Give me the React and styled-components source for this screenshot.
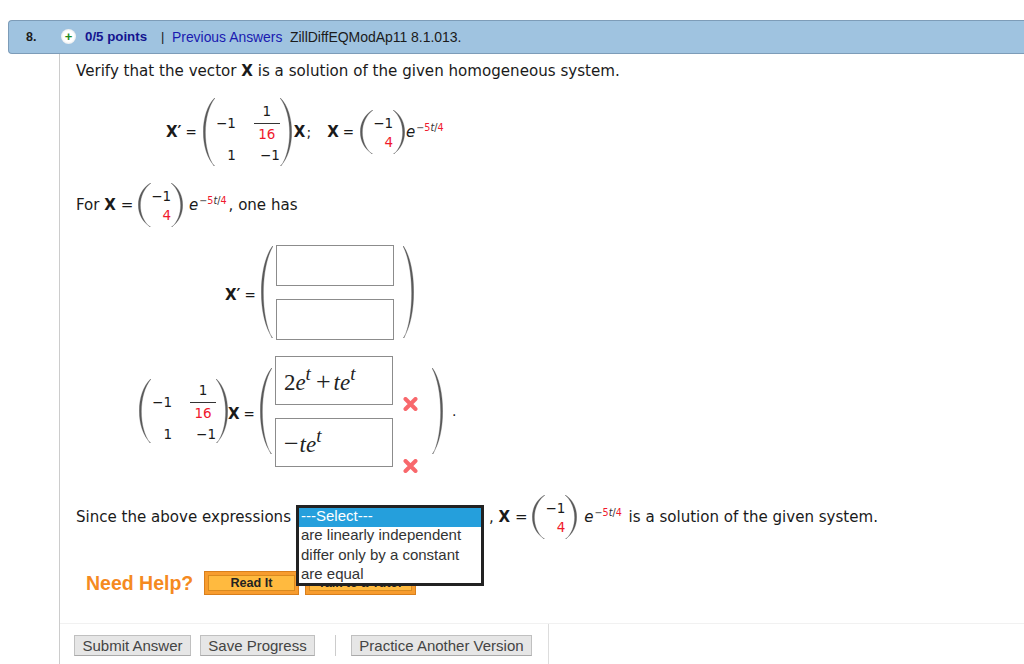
import React from 'react';
import styled, { createGlobalStyle } from 'styled-components';

const Global = createGlobalStyle`
  html, body { margin: 0; padding: 0; background: #fff; }
  body { width: 1024px; height: 664px; overflow: hidden; font-family: "DejaVu Sans", sans-serif; color: #1a1a1a; }
`;
const Page = styled.div`width: 1024px; height: 664px; overflow: hidden; display: flex; flex-direction: column; padding-top: 20px; box-sizing: border-box;`;
const Header = styled.header`
  margin-left: 8px; height: 34px; box-sizing: border-box; background: #9fc3e0; border: 1px solid #7d9cb8; border-right: none; padding-bottom: 1px;
  border-radius: 4px 0 0 4px; display: flex; align-items: center; font-family: "Liberation Sans", sans-serif; font-size: 14px; color: #1b1b1b;
`;
const Num = styled.b`font-size: 12.5px; width: 52px; padding-left: 17px; box-sizing: border-box;`;
const Plus = styled.span`
  width: 15px; height: 15px; border-radius: 50%; background: radial-gradient(#fff 50%, #cfd3d6); display: flex; align-items: center; justify-content: center;
  color: #1c8a1c; font-weight: bold; font-size: 13px; line-height: 15px; margin-right: 9px;
`;
const Points = styled.b`color: #14148f; font-size: 13.3px; width: 76px;`;
const Sep = styled.span`width: 11px; font-size: 13px;`;
const PrevLink = styled.span`color: #1a1ab0; font-size: 13.9px; width: 118px;`;
const Code = styled.span`font-size: 14px; letter-spacing: -0.03px;`;
const Content = styled.main`flex: 1; margin-left: 59px; border-left: 1px solid #ccc; display: flex; flex-direction: column; min-height: 0;`;
const Body = styled.div`padding-left: 16px; flex: 1; min-height: 0; display: flex; flex-direction: column;`;
const Prompt = styled.p`margin: 8px 0 0; font-size: 15.1px; line-height: 18px; height: 18px; white-space: nowrap;`;
const MathRow = styled.div`
  display: flex; align-items: center; white-space: nowrap; font-size: 15.05px; height: ${p => p.$h}px;
  margin-top: ${p => p.$top}px; margin-left: ${p => p.$left || 0}px;
`;
const Eq = styled.span`
  font-size: 13.5px; display: inline-flex; gap: 4px; align-items: center; margin-right: ${p => p.$mr || 0}px; margin-left: ${p => p.$ml || 0}px;
  padding-top: ${p => p.$pt || 0}px;
`;
const BoldX = styled.b`font-size: 15px; margin-left: ${p => p.$ml || 0}px;`;
const Semi = styled.span`font-size: 14px; margin-left: 1px;`;
const ParenSvg = styled.svg`flex: none; display: block; margin: ${p => p.$m || 0};`;
const Cells = styled.div`
  display: grid; grid-template-columns: ${p => p.$cols}; grid-auto-rows: auto; font-size: 13.5px; line-height: 16px; align-items: center; justify-items: end;
  row-gap: ${p => p.$gap || 0}px; padding-top: ${p => p.$pt || 0}px;
`;
const Red = styled.span`color: #f0182c;`;
const Frac = styled.span`display: inline-flex; flex-direction: column; align-items: center; width: 26px; line-height: 15px;`;
const FracTop = styled.span`display: block; width: 100%; text-align: center; border-bottom: 1px solid #333; padding-bottom: 4px; margin-bottom: 3px;`;
const Power = styled.span`display: inline-block; margin-left: ${p => p.$ml || 0}px; margin-right: ${p => p.$mr || 0}px;`;
const E = styled.i`font-size: 15px;`;
const Sup = styled.sup`font-size: 9.6px; line-height: 0; vertical-align: 6px; color: #333; margin-left: 1px;`;
const SupRed = styled.span`color: #f0182c;`;
const Fields = styled.div`display: flex; flex-direction: column; gap: ${p => p.$gap}px; margin: 0 ${p => p.$mr}px 0 1px;`;
const FieldWrap = styled.div`position: relative;`;
const Field = styled.div`
  box-sizing: border-box; width: 118px; height: ${p => p.$h}px; border: 1px solid #8c8c8c; background: #fff; display: flex; align-items: center; padding: 6px 0 0 8px;
  font-family: "Liberation Serif", serif; font-size: 23px; color: #222; white-space: nowrap;
`;
const MathText = styled.span`display: block;`;
const MathI = styled.i`font-family: "Liberation Serif", serif;`;
const MathOp = styled.span`font-size: 26px; line-height: 0; margin: ${p => p.$m};`;
const MathSup = styled.sup`font-size: 19px; line-height: 0; vertical-align: 10px; font-style: italic;`;
const Mark = styled.svg`position: absolute; left: 128px; bottom: -6px; width: 15px; height: 14px;`;
const Dot = styled.span`margin-left: 9px; font-size: 14px;`;
const Placeholder = styled.span`display: inline-block; position: relative; width: 188px; height: 20px; margin: 0 5px 0 5px; flex: none;`;
const Dropdown = styled.ul`
  position: absolute; z-index: 3; left: 0; top: -2px; width: 188px; height: 81px; box-sizing: border-box; margin: 0; padding: 0; list-style: none; background: #fff; border: 3px solid #222;
  font-family: "Liberation Sans", sans-serif; font-size: 15px; color: #333; line-height: 16.5px;
`;
const Option = styled.li`padding-left: 2px; height: 19.3px; ${p => p.$active && 'background:#259fdc;color:#fff;'}`;
const HelpRow = styled.div`display: flex; align-items: center; height: 24px; margin: 31px 0 0 10px;`;
const HelpLabel = styled.b`font-family: "Liberation Sans", sans-serif; font-size: 19.5px; color: #f58a1f; width: 118px;`;
const HelpBtn = styled.span`
  box-sizing: border-box; width: ${p => p.$w}px; height: 24px; margin-right: 6px; background: #ffba3f; border: 1px solid #d97f1c; box-shadow: inset 0 0 0 3px #f79c2e, inset 0 0 0 4px #d98a1f;
  display: flex; align-items: center; justify-content: center; font: bold 12.6px "Liberation Sans", sans-serif; color: #222;
`;
const Footer = styled.footer`margin-top: auto; height: 41px; display: flex; border-top: 1px solid #f1f1f1; box-sizing: border-box;`;
const Buttons = styled.div`width: 489px; display: flex; align-items: center; padding: 11px 0 8px 14px; box-sizing: border-box; border-right: 1px solid #ddd;`;
const Btn = styled.span`
  box-sizing: border-box; height: 21px; width: ${p => p.$w}px; margin-right: ${p => p.$mr || 0}px; background: #e6e6e6; border: 1px solid #c0c0c0; border-bottom-color: #aaa; display: flex; align-items: center; justify-content: center;
  font: 15px "Liberation Sans", sans-serif; color: #444; white-space: nowrap;
`;
const Divider = styled.span`width: 1px; height: 21px; background: #ccc; margin-right: 15px;`;

const Paren = ({ h, w = 12, right, m }) => {
  const outer = (0.4 - 0.25 * w) / 0.75;
  const inner = (2.5 - 0.25 * w) / 0.75;
  return (
    <ParenSvg width={w} height={h} viewBox={`0 0 ${w} ${h}`} $m={m}>
      <g transform={right ? `translate(${w} 0) scale(-1 1)` : undefined}>
        <path
          d={`M${w - 0.4} 0 C ${outer} ${h * 0.22}, ${outer} ${h * 0.78}, ${w - 0.4} ${h} L ${w - 1} ${h} C ${inner} ${h * 0.76}, ${inner} ${h * 0.24}, ${w} 0 Z`}
          fill="#5a5a5a" stroke="#5a5a5a" strokeWidth="0.3"
        />
      </g>
    </ParenSvg>
  );
};
const Matrix2 = ({ h = 68 }) => (
  <>
    <Paren h={h} w={12} />
    <Cells $cols="21px 44px" $gap={5} $pt={2}>
      <span>−1</span>
      <Frac><FracTop>1</FracTop><Red>16</Red></Frac>
      <span>1</span>
      <span>−1</span>
    </Cells>
    <Paren h={h} w={12} right />
  </>
);
const Vector = ({ h = 44 }) => (
  <>
    <Paren h={h} w={13} />
    <Cells $cols="20px" $gap={3}>
      <span>−1</span>
      <Red>4</Red>
    </Cells>
    <Paren h={h} w={12} right />
  </>
);
const Exp = ({ ml, mr }) => (
  <Power $ml={ml} $mr={mr}>
    <E>e</E>
    <Sup>−<SupRed>5</SupRed><i>t</i>/<SupRed>4</SupRed></Sup>
  </Power>
);
const Cross = () => (
  <Mark viewBox="0 0 15 14">
    <path d="M2.5 2 L12.5 12 M12.5 2 L2.5 12" stroke="#f8686c" strokeWidth="4" strokeLinecap="round" />
  </Mark>
);

export default function App() {
  return (
    <Page>
      <Global />
      <Header>
        <Num>8.</Num>
        <Plus>+</Plus>
        <Points>0/5 points</Points>
        <Sep>|</Sep>
        <PrevLink>Previous Answers</PrevLink>
        <Code>ZillDiffEQModAp11 8.1.013.</Code>
      </Header>
      <Content>
        <Body>
          <Prompt>Verify that the vector <b>X</b> is a solution of the given homogeneous system.</Prompt>
          <MathRow $h={68} $top={18} $left={90}>
            <Eq $mr={6}><BoldX>X′</BoldX> =</Eq>
            <Matrix2 />
            <BoldX $ml={2}>X</BoldX><Semi>;</Semi>
            <Eq $ml={16} $mr={6}><BoldX>X</BoldX> =</Eq>
            <Vector />
            <Exp ml={1} />
          </MathRow>
          <MathRow $h={46} $top={16}>
            For&nbsp;<BoldX>X</BoldX>&nbsp;=&nbsp;<Vector />
            <Exp ml={6} mr={2} />, one has
          </MathRow>
          <MathRow $h={94} $top={17} $left={149}>
            <Eq $mr={5} $pt={6}><BoldX>X′</BoldX> =</Eq>
            <Paren h={92} w={12} m="0 2px 0 0" />
            <Fields $gap={13} $mr={9}>
              <FieldWrap><Field $h={41} /></FieldWrap>
              <FieldWrap><Field $h={41} /></FieldWrap>
            </Fields>
            <Paren h={92} w={11} right />
          </MathRow>
          <MathRow $h={112} $top={16} $left={63}>
            <Matrix2 h={64} />
            <Eq $mr={5} $pt={6}><BoldX>X</BoldX> =</Eq>
            <Paren h={86} w={12} m="0 2px 0 0" />
            <Fields $gap={13} $mr={39}>
              <FieldWrap>
                <Field $h={49}>
                  <MathText>2<MathI>e</MathI><MathSup>t</MathSup><MathOp $m="0 3px 0 5px">+</MathOp><MathI>te</MathI><MathSup>t</MathSup></MathText>
                </Field>
                <Cross />
              </FieldWrap>
              <FieldWrap>
                <Field $h={49}>
                  <MathText><MathOp $m="0 1px 0 0">−</MathOp><MathI>te</MathI><MathSup>t</MathSup></MathText>
                </Field>
                <Cross />
              </FieldWrap>
            </Fields>
            <Paren h={86} w={11} right />
            <Dot>.</Dot>
          </MathRow>
          <MathRow $h={46} $top={27}>
            Since the above expressions
            <Placeholder>
              <Dropdown>
                <Option $active>---Select---</Option>
                <Option>are linearly independent</Option>
                <Option>differ only by a constant</Option>
                <Option>are equal</Option>
              </Dropdown>
            </Placeholder>
            ,&nbsp;<BoldX>X</BoldX>&nbsp;=&nbsp;<Vector />
            <Exp ml={7} mr={2} />&nbsp;is a solution of the given system.
          </MathRow>
          <HelpRow>
            <HelpLabel>Need Help?</HelpLabel>
            <HelpBtn $w={95}>Read It</HelpBtn>
            <HelpBtn $w={111}>Talk to a Tutor</HelpBtn>
          </HelpRow>
        </Body>
        <Footer>
          <Buttons>
            <Btn $w={117} $mr={9}>Submit Answer</Btn>
            <Btn $w={115} $mr={20}>Save Progress</Btn>
            <Divider />
            <Btn $w={181}>Practice Another Version</Btn>
          </Buttons>
        </Footer>
      </Content>
    </Page>
  );
}
